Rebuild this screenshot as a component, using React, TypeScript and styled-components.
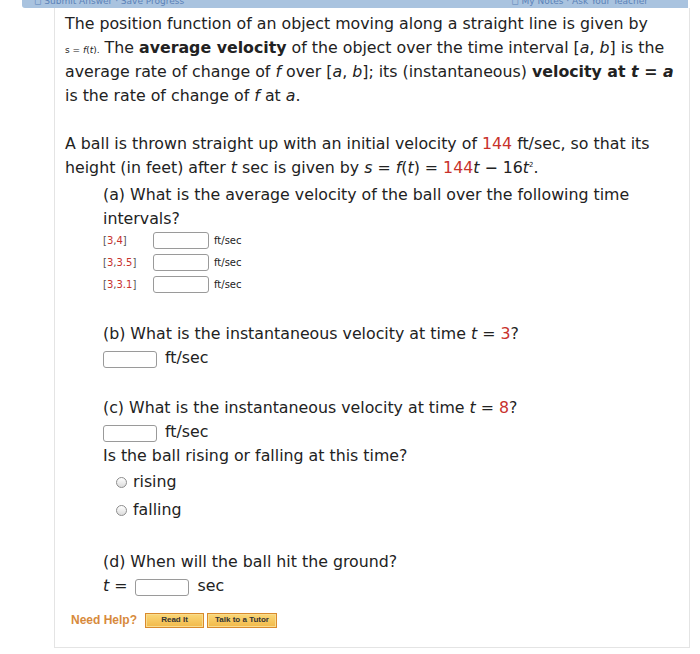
import { Fragment } from "react";
import styled, { createGlobalStyle } from "styled-components";

const GlobalStyle = createGlobalStyle`
  html, body {
    margin: 0;
    padding: 0;
    background: #ffffff;
  }
  body {
    font-family: "DejaVu Sans", Verdana, sans-serif;
    color: #222222;
  }
`;

const Page = styled.div`
  width: 700px;
  height: 654px;
  overflow: hidden;
`;

const TopBar = styled.div`
  margin-left: 22px;
  width: 666px;
  height: 8px;
  background: #a9c3df;
  border-bottom-left-radius: 3px;
  overflow: hidden;
  display: flex;
  justify-content: space-between;
  align-items: flex-end;
  padding: 0 40px 0 12px;
  box-sizing: border-box;
  font-size: 9px;
  color: #5b82b8;
`;

const BarText = styled.span`
  line-height: 14px;
  height: 14px;
  white-space: nowrap;
`;

const Panel = styled.div`
  margin-left: 54px;
  width: 636px;
  height: 640px;
  box-sizing: border-box;
  border: 1px solid #e4e4e4;
  border-top: none;
  padding: 4px 4px 0 10px;
  font-size: 15.8px;
  line-height: 24px;
`;

const Para = styled.p<{ $gap?: number }>`
  margin: 0 0 ${(p) => p.$gap ?? 0}px 0;
`;

const SmallMath = styled.span`
  font-size: 9px;
  line-height: 1;
  white-space: nowrap;
`;

const Red = styled.span`
  color: #c8322c;
`;

const Sup = styled.sup`
  font-size: 7px;
  line-height: 0;
`;

const Sub = styled.div<{ $top?: number }>`
  margin-left: 38px;
  margin-top: ${(p) => p.$top ?? 0}px;
`;

const Table = styled.div`
  display: grid;
  grid-template-columns: 50px 58px auto;
  row-gap: 5px;
  align-items: center;
  margin-top: 1px;
  font-size: 10px;
  line-height: 17px;
`;

const RangeLabel = styled.span`
  color: #555555;
`;

const Box = styled.span<{ $w?: number; $h?: number }>`
  display: inline-block;
  width: ${(p) => p.$w ?? 54}px;
  height: ${(p) => p.$h ?? 16}px;
  box-sizing: border-box;
  border: 1px solid #9a9a9a;
  border-radius: 3px;
  background: #ffffff;
  vertical-align: middle;
`;

const UnitSmall = styled.span`
  font-size: 10px;
  margin-left: 3px;
`;

const AnswerLine = styled.div`
  display: flex;
  align-items: flex-start;
  gap: 8px;
  height: 24px;
`;

const AnswerBox = styled(Box)`
  margin-top: 5px;
`;

const Radio = styled.label`
  display: flex;
  align-items: center;
  gap: 6px;
  margin-left: 13px;
  height: 28px;
`;

const RadioDot = styled.span`
  width: 11px;
  height: 11px;
  border-radius: 50%;
  box-sizing: border-box;
  border: 1px solid #8d8d8d;
  background: linear-gradient(#ffffff, #dcdcdc);
`;

const HelpRow = styled.div`
  display: flex;
  align-items: center;
  gap: 3px;
  margin-top: 10px;
  margin-left: 6px;
  font-family: "Liberation Sans", Arial, sans-serif;
`;

const HelpText = styled.span`
  color: #d78a3c;
  font-weight: bold;
  font-size: 12px;
  margin-right: 5px;
`;

const HelpButton = styled.span<{ $w: number }>`
  display: inline-flex;
  justify-content: center;
  align-items: center;
  width: ${(p) => p.$w}px;
  height: 15px;
  box-sizing: border-box;
  border: 1px solid #d98a2d;
  box-shadow: inset 0 0 0 1px #f8dc8e;
  background: linear-gradient(#fbd777, #f1b94a);
  font-size: 8px;
  font-weight: bold;
  color: #333333;
  line-height: 1;
`;

const intervals = [
  ["3", "4"],
  ["3", "3.5"],
  ["3", "3.1"],
];

export default function App() {
  return (
    <Page>
      <GlobalStyle />
      <TopBar>
        <BarText>◻ Submit Answer · Save Progress</BarText>
        <BarText>◻ My Notes · Ask Your Teacher</BarText>
      </TopBar>
      <Panel>
        <Para $gap={24}>
          The position function of an object moving along a straight line is given by{" "}
          <SmallMath>
            s = <i>f</i>(<i>t</i>).
          </SmallMath>{" "}
          The <b>average velocity</b> of the object over the time interval [<i>a</i>, <i>b</i>] is the
          average rate of change of <i>f</i> over [<i>a</i>, <i>b</i>]; its (instantaneous){" "}
          <b>
            velocity at <i>t</i> = <i>a</i>
          </b>{" "}
          is the rate of change of <i>f</i> at <i>a</i>.
        </Para>
        <Para>
          A ball is thrown straight up with an initial velocity of <Red>144</Red> ft/sec, so that its
          height (in feet) after <i>t</i> sec is given by <i>s</i> = <i>f</i>(<i>t</i>) ={" "}
          <Red>144</Red>
          <i>t</i> − 16<i>t</i>
          <Sup>2</Sup>.
        </Para>
        <Sub $top={3}>
          (a) What is the average velocity of the ball over the following time intervals?
          <Table>
            {intervals.map(([a, b]) => (
              <Fragment key={b}>
                <RangeLabel>
                  [<Red>{a}</Red>,<Red>{b}</Red>]
                </RangeLabel>
                <Box $w={56} $h={17} />
                <UnitSmall>ft/sec</UnitSmall>
              </Fragment>
            ))}
          </Table>
        </Sub>
        <Sub $top={29}>
          <div>
            (b) What is the instantaneous velocity at time <i>t</i> = <Red>3</Red>?
          </div>
          <AnswerLine>
            <AnswerBox $w={54} $h={17} />
            <span>ft/sec</span>
          </AnswerLine>
        </Sub>
        <Sub $top={26}>
          <div>
            (c) What is the instantaneous velocity at time <i>t</i> = <Red>8</Red>?
          </div>
          <AnswerLine>
            <AnswerBox $w={54} $h={17} />
            <span>ft/sec</span>
          </AnswerLine>
          <div>Is the ball rising or falling at this time?</div>
          <Radio>
            <RadioDot />
            rising
          </Radio>
          <Radio>
            <RadioDot />
            falling
          </Radio>
        </Sub>
        <Sub $top={26}>
          <div>(d) When will the ball hit the ground?</div>
          <AnswerLine>
            <span>
              <i>t</i> =
            </span>
            <AnswerBox $w={54} $h={17} />
            <span>sec</span>
          </AnswerLine>
        </Sub>
        <HelpRow>
          <HelpText>Need Help?</HelpText>
          <HelpButton $w={59}>Read It</HelpButton>
          <HelpButton $w={70}>Talk to a Tutor</HelpButton>
        </HelpRow>
      </Panel>
    </Page>
  );
}
